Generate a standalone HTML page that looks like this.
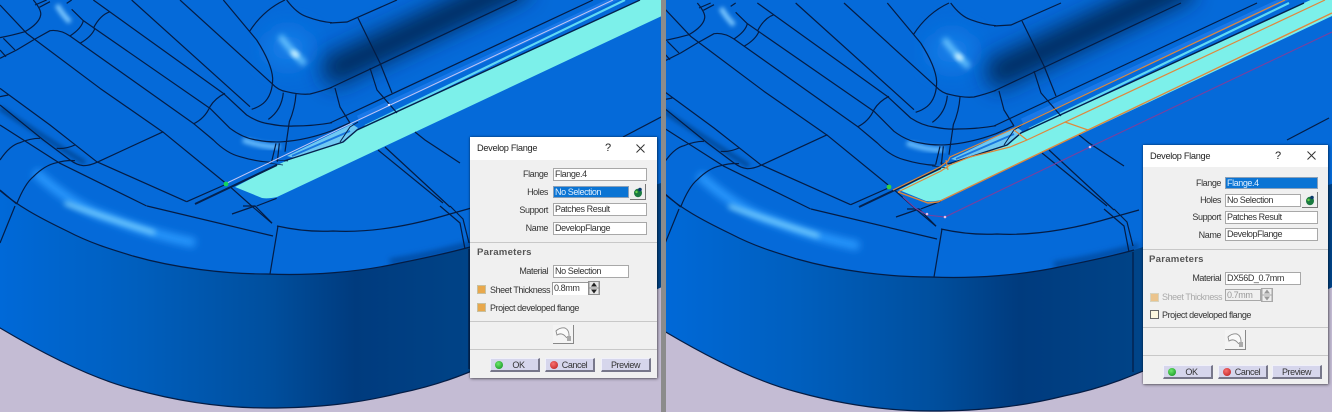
<!DOCTYPE html>
<html><head><meta charset="utf-8">
<style>
html,body{margin:0;padding:0;background:#c4bcd4}
#r{position:relative;width:1332px;height:412px;overflow:hidden;font-family:"Liberation Sans",sans-serif;color:#333}
svg.s{position:absolute;left:0;top:0;filter:blur(.3px)}
.d{position:absolute;background:#f0f0f0;box-shadow:0 0 2px rgba(0,0,0,.55),1px 1px 3px rgba(0,0,0,.35);font-size:9px;line-height:12px;letter-spacing:-.42px}
.d div{position:absolute;white-space:nowrap}
.t{left:0;top:0;right:0;height:23px;background:#fff}
.tt{left:7px;top:5px;font-size:9.2px;line-height:12px;color:#222;letter-spacing:-.3px}
.l{text-align:right;width:70px;left:8px}
.f{background:#fff;border:1px solid #a8a8a8;box-sizing:border-box;padding-left:1px;line-height:11px;height:13px}
.sel{background:#0a74d4;color:#dfefff;border-color:#8aa0b8}
.h{left:0;right:0;height:1px;background:#c8c8c8}
.p{font-weight:bold;color:#555;font-size:9.6px;letter-spacing:.25px}
.b{background:#d6d6ec;height:14px;width:50px;box-sizing:border-box;border-right:2px solid #77778a;border-bottom:2px solid #77778a;border-top:1px solid #f0f0fa;border-left:1px solid #f0f0fa;text-align:center;line-height:12px;color:#333}
.c{width:7px;height:7px;background:#e8a84c;border:1px solid #c8c0a0;box-sizing:content-box}
.dot{border-radius:50%;width:8px;height:8px}
</style></head><body><div id="r">
<svg class="s" width="1332" height="412" viewBox="0 0 1332 412" xmlns="http://www.w3.org/2000/svg">
<defs>
<filter id="b2" x="-50%" y="-50%" width="200%" height="200%"><feGaussianBlur stdDeviation="2"/></filter>
<filter id="b3" x="-50%" y="-50%" width="200%" height="200%"><feGaussianBlur stdDeviation="3"/></filter>
<filter id="b4" x="-50%" y="-50%" width="200%" height="200%"><feGaussianBlur stdDeviation="4"/></filter>
<filter id="b9" x="-30%" y="-80%" width="160%" height="260%"><feGaussianBlur stdDeviation="11"/></filter>
<linearGradient id="w" x1="0" y1="0" x2="480" y2="0" gradientUnits="userSpaceOnUse">
<stop offset="0" stop-color="#0069d8"/><stop offset=".28" stop-color="#005fbe"/><stop offset=".56" stop-color="#004f9e"/><stop offset=".74" stop-color="#003b7e"/><stop offset="1" stop-color="#004488"/>
</linearGradient>
<clipPath id="cl"><rect x="0" y="0" width="661" height="412"/></clipPath>
<clipPath id="cr"><rect x="666" y="0" width="666" height="412"/></clipPath>
<g id="m">
<rect x="-5" y="-5" width="700" height="425" fill="#c4bcd4"/>
<!-- solid body -->
<path d="M-5 325C40 352 90 378 133 389C180 402 225 408 267 408C320 408 360 403 400 393C440 385 470 373 520 350L700 270V-5H-5Z" fill="#056ad9"/>
<!-- dark band -->
<path d="M325 74L525 -20" stroke="#00295c" stroke-width="30" fill="none" filter="url(#b9)"/>
<!-- knob -->
<ellipse cx="288" cy="48" rx="24" ry="20" fill="#147ee8" filter="url(#b9)"/>
<path d="M280 36Q292 52 305 64" stroke="#68c4ff" stroke-width="6" fill="none" filter="url(#b3)"/>
<ellipse cx="295" cy="54" rx="5" ry="3" fill="#c8f0ff" filter="url(#b2)" transform="rotate(40 295 54)"/>
<path d="M57 5Q62 14 70 22" stroke="#7cc8ff" stroke-width="5" fill="none" filter="url(#b2)"/>
<path d="M243 140Q262 147 280 147" stroke="#6cc0ff" stroke-width="5" fill="none" filter="url(#b2)"/>
<!-- trough shade -->
<path d="M0 108Q40 135 85 163" stroke="#004b9f" stroke-width="5" fill="none" filter="url(#b2)"/>
<!-- rim highlights -->
<path d="M35 172Q75 208 110 218Q150 234 195 243" stroke="#2a9aff" stroke-width="9" fill="none" filter="url(#b4)"/>
<path d="M65 203Q100 216 155 233" stroke="#90e0ff" stroke-width="3.5" fill="none" filter="url(#b3)"/>
<!-- rim dark near corner -->
<path d="M390 262Q430 256 475 243" stroke="#004a9e" stroke-width="6" fill="none" filter="url(#b3)"/>
<!-- wall -->
<path d="M-5 186C15 205 40 218 67 231C90 243 110 249 133 256C175 268 225 274 267 274C310 276 360 272 400 263C420 259 445 254 470 247L700 170V270L520 350C470 373 440 385 400 393C360 403 320 408 267 408C225 408 180 402 133 389C90 378 40 352 -5 325Z" fill="url(#w)"/>
<!-- cyan band -->
<path d="M235 187L277 165L295 157L343 142L357 130L640 0L700 -28V-2L277 197Q268 199 262 198Z" fill="#7cf0ea"/>
<!-- transition strip -->
<path d="M287 156L352 124L358 128L345 142L295 158Z" fill="#6fc8f2"/>
<path d="M292 156L350 131" stroke="#1a78e0" stroke-width="2" fill="none"/>
<path d="M358 118L625 -6" stroke="#1a78e8" stroke-width="5" fill="none"/>
<path d="M365 126L625 0" stroke="#5fd8f4" stroke-width="2.2" fill="none"/>
<!-- lines traced at 3x -->
<g transform="scale(.33333)" fill="none" stroke="#041c44" stroke-width="3.6" stroke-linejoin="round">
<path d="M0 15L80 100L300 265L490 397L680 552"/>
<path d="M100 0Q125 30 122 45Q118 70 75 95Q40 105 0 113"/>
<path d="M10 115L45 150M0 150L18 170"/>
<path d="M0 175L50 150L100 120L150 92Q180 88 210 108L580 370L640 420Q680 460 720 470Q770 485 815 487"/>
<path d="M215 28L250 62L630 325L690 385Q730 415 770 420Q810 428 850 425Q920 420 996 392L1050 368"/>
<path d="M280 0L670 280L740 345Q775 368 810 372Q850 380 880 378Q940 378 996 368"/>
<path d="M395 0L750 320"/>
<path d="M540 0L815 250"/>
<path d="M670 0L770 120Q815 190 818 235Q818 285 790 310Q775 322 755 328"/>
<path d="M855 0Q790 30 748 95"/>
<path d="M860 0Q890 40 920 50Q960 65 996 68"/>
<path d="M815 250Q835 272 860 275Q900 285 930 282Q960 275 996 262"/>
<path d="M105 15L140 0M118 22L150 5M200 10L215 0"/>
<path d="M280 85Q300 45 330 35"/>
<path d="M250 62Q245 85 210 108"/>
<path d="M285 85Q275 110 240 130"/>
<path d="M675 280Q645 295 630 320Q615 355 580 372"/>
<path d="M850 278Q845 330 805 358"/>
<path d="M888 282Q885 325 868 365L855 455"/>
<path d="M828 430L815 485M838 430L832 485"/>
<path d="M0 265L150 375L290 485L560 605"/>
<path d="M0 375L180 490L440 618"/>
<path d="M490 395L295 485"/>
<path d="M295 485Q270 497 250 497Q230 495 210 480L130 420L0 315"/>
<path d="M0 290L25 285"/>
<path d="M0 480Q30 435 60 428Q90 415 120 415"/>
<path d="M50 612Q75 550 100 530Q135 495 170 488Q200 480 225 482"/>
<path d="M225 435Q195 448 170 445"/>
<path d="M0 570L50 612"/>
<path d="M560 605L680 552"/>
<path d="M690 560L755 618L816 670"/>
<path d="M770 618L830 595"/>
</g>
<g fill="none" stroke="#041c44" stroke-width="1.2">
<path d="M243 206L255 206"/>
<path d="M232 214L255 206L272 223"/>
<path d="M147 206L273 236"/>
<path d="M277 226C295 230 315 232 333 231C370 233 410 226 450 214L475 207"/>
<path d="M278 226L270 274"/>
<path d="M440 206L460 223L465 249"/>
<path d="M450 206L463 219L469 243"/>
<path d="M15 206L0 243"/>
<path d="M469 249V369"/>
<path d="M-5 186C15 205 40 218 67 231C90 243 110 249 133 256C175 268 225 274 267 274C310 276 360 272 400 263C420 259 445 254 470 247"/>
<path d="M-5 325C40 352 90 378 133 389C180 402 225 408 267 408C320 408 360 403 400 393C440 385 470 373 520 350"/>
<path d="M335 88L340 107L350 123"/>
<path d="M358 18L380 63L392 93"/>
<path d="M370 68L377 90L397 113"/>
<path d="M330 123L347 115L593 0"/>
<path d="M330 88L517 0"/>
<path d="M330 23L347 22L397 0"/>
<path d="M415 132L425 140L460 163"/>
<path d="M378 150L443 203"/>
<path d="M385 147L450 207"/>
<path d="M623 137L665 115"/>
</g>
<path d="M195 204L277 165" stroke="#05214d" stroke-width="2" fill="none"/>
<path d="M284 161L343 142L357 130L640 0" stroke="#05214d" stroke-width="1.4" fill="none"/>
<path d="M340 142L350 127L358 122" stroke="#05214d" stroke-width="1" fill="none"/>
<path d="M268 163L283 165M276 160L288 161" stroke="#05214d" stroke-width=".8" fill="none"/>
</g>
</defs>
<g clip-path="url(#cl)">
<use href="#m"/>
<path d="M227 183L352 123L613 0" stroke="#c2c6f4" stroke-width="1" fill="none"/>
<circle cx="389" cy="105" r="1.2" fill="#e8e8ff"/>
<circle cx="226" cy="184" r="2.4" fill="#16d45a"/>
</g>
<rect x="661" y="0" width="5" height="412" fill="#8c8c8c"/>
<g clip-path="url(#cr)">
<g transform="translate(664 3)"><use href="#m"/></g>
<g fill="none" stroke="#e0883c" stroke-width="1.2">
<path d="M893 190L940 167L948 161L950 157L1015 128L1285 0"/>
<path d="M898 192L941 171L950 165L970 157L1010 147L1027 140L1325 0"/>
<path d="M1065 122L1088 130"/>
<path d="M898 192L928 203L938 202L1088 130L1332 13" stroke-width="1.4"/>
<path d="M946 160L948 170M1014 130L1027 140"/>
</g>
<path d="M903 197L915 208L927 215L945 217L1090 147L1332 32" fill="none" stroke="#78409e" stroke-width="1.1"/>
<g fill="#e8c0e8"><circle cx="927" cy="214" r="1.3"/><circle cx="945" cy="217" r="1.3"/><circle cx="1090" cy="147" r="1.3"/></g>
<circle cx="889" cy="187" r="2.4" fill="#34d044"/>
</g>
</svg>

<!-- left dialog -->
<div class="d" style="left:470px;top:137px;width:187px;height:241px">
<div class="t"></div><div class="tt">Develop Flange</div>
<div style="left:135px;top:4px;font-size:11px;line-height:14px;color:#222">?</div>
<svg style="position:absolute;left:165px;top:6px" width="11" height="11"><path d="M1.5 1.5L9.5 9.5M9.5 1.5L1.5 9.5" stroke="#333" stroke-width="1" fill="none"/></svg>
<div class="l" style="top:31px">Flange</div><div class="f" style="left:83px;top:31px;width:94px">Flange.4</div>
<div class="l" style="top:49px">Holes</div><div class="f sel" style="left:83px;top:49px;width:76px;height:12px">No Selection</div>
<div style="left:160px;top:47px;width:16px;height:16px;background:#efefef;border-right:1px solid #777;border-bottom:1px solid #777;box-sizing:border-box"></div>
<svg style="position:absolute;left:162px;top:49px" width="12" height="12"><ellipse cx="6" cy="7" rx="4" ry="4.2" fill="#1a7a40"/><circle cx="8" cy="3.5" r="1.8" fill="#0a3a6a"/><circle cx="4.5" cy="6" r="1.2" fill="#69d04a"/></svg>
<div class="l" style="top:67px">Support</div><div class="f" style="left:83px;top:66px;width:94px">Patches Result</div>
<div class="l" style="top:85px">Name</div><div class="f" style="left:83px;top:85px;width:94px">DevelopFlange</div>
<div class="h" style="top:105px"></div>
<div class="p" style="left:7px;top:110px">Parameters</div>
<div class="l" style="top:128px">Material</div><div class="f" style="left:83px;top:128px;width:76px">No Selection</div>
<div class="c" style="left:7px;top:148px"></div><div style="left:20px;top:147px">Sheet Thickness</div>
<div class="f" style="left:82px;top:145px;width:37px;height:13px;border:none;border-left:1px solid #999;border-top:1px solid #999">0.8mm</div>
<svg style="position:absolute;left:118px;top:144px" width="12" height="14"><rect width="12" height="14" fill="#909090"/><rect x="1.5" y="1" width="9" height="5.5" fill="#e8e8e8"/><rect x="1.5" y="7.5" width="9" height="5.5" fill="#e8e8e8"/><path d="M6 1.5L9 5.5H3ZM6 12.5L9 8.5H3Z" fill="#222"/></svg>
<div class="c" style="left:7px;top:166px"></div><div style="left:20px;top:165px">Project developed flange</div>
<div class="h" style="top:184px"></div>
<div style="left:83px;top:188px;width:21px;height:19px;background:#f4f4f4;border-right:1px solid #888;border-bottom:1px solid #888;box-sizing:border-box"></div>
<svg style="position:absolute;left:84px;top:189px" width="18" height="17"><path d="M2 5Q6 1 11 2Q15 4 15 9V13L12 11Q8 6 3 9Z" fill="#fafafa" stroke="#888" stroke-width=".9"/><rect x="13" y="10" width="4" height="5" fill="#aaa"/></svg>
<div class="h" style="top:212px"></div>
<div class="b" style="left:20px;top:221px;padding-left:8px">OK</div>
<div class="dot" style="left:25px;top:224px;background:radial-gradient(circle at 40% 35%,#6de86d,#0a8a1a)"></div>
<div class="b" style="left:75px;top:221px;padding-left:10px">Cancel</div>
<div class="dot" style="left:80px;top:224px;background:radial-gradient(circle at 40% 35%,#f87070,#b81818)"></div>
<div class="b" style="left:131px;top:221px">Preview</div>
</div>

<!-- right dialog -->
<div class="d" style="left:1143px;top:145px;width:185px;height:239px">
<div class="t" style="height:22px"></div><div class="tt">Develop Flange</div>
<div style="left:132px;top:4px;font-size:11px;line-height:14px;color:#222">?</div>
<svg style="position:absolute;left:163px;top:5px" width="11" height="11"><path d="M1.5 1.5L9.5 9.5M9.5 1.5L1.5 9.5" stroke="#333" stroke-width="1" fill="none"/></svg>
<div class="l" style="top:32px">Flange</div><div class="f sel" style="left:82px;top:32px;width:93px;height:12px">Flange.4</div>
<div class="l" style="top:49px">Holes</div><div class="f" style="left:82px;top:49px;width:76px">No Selection</div>
<div style="left:159px;top:47px;width:16px;height:16px;background:#efefef;border-right:1px solid #777;border-bottom:1px solid #777;box-sizing:border-box"></div>
<svg style="position:absolute;left:161px;top:49px" width="12" height="12"><ellipse cx="6" cy="7" rx="4" ry="4.2" fill="#1a7a40"/><circle cx="8" cy="3.5" r="1.8" fill="#0a3a6a"/><circle cx="4.5" cy="6" r="1.2" fill="#69d04a"/></svg>
<div class="l" style="top:66px">Support</div><div class="f" style="left:82px;top:66px;width:93px">Patches Result</div>
<div class="l" style="top:84px">Name</div><div class="f" style="left:82px;top:83px;width:93px">DevelopFlange</div>
<div class="h" style="top:104px"></div>
<div class="p" style="left:6px;top:109px">Parameters</div>
<div class="l" style="top:127px">Material</div><div class="f" style="left:82px;top:127px;width:76px">DX56D_0.7mm</div>
<div class="c" style="left:7px;top:148px;opacity:.6"></div><div style="left:19px;top:146px;color:#aaa">Sheet Thickness</div>
<div class="f" style="left:82px;top:144px;width:36px;height:12px;color:#999;background:#f0f0f0">0.7mm</div>
<svg style="position:absolute;left:118px;top:143px" width="12" height="14"><rect width="12" height="14" fill="#a8a8a8"/><rect x="1.5" y="1" width="9" height="5.5" fill="#eee"/><rect x="1.5" y="7.5" width="9" height="5.5" fill="#eee"/><path d="M6 1.5L9 5.5H3ZM6 12.5L9 8.5H3Z" fill="#999"/></svg>
<div class="c" style="left:7px;top:165px;background:#fdf8e0;border-color:#666"></div><div style="left:19px;top:164px">Project developed flange</div>
<div class="h" style="top:182px"></div>
<div style="left:82px;top:185px;width:21px;height:20px;background:#f4f4f4;border-right:1px solid #888;border-bottom:1px solid #888;box-sizing:border-box"></div>
<svg style="position:absolute;left:83px;top:187px" width="18" height="17"><path d="M2 5Q6 1 11 2Q15 4 15 9V13L12 11Q8 6 3 9Z" fill="#fafafa" stroke="#888" stroke-width=".9"/><rect x="13" y="10" width="4" height="5" fill="#aaa"/></svg>
<div class="h" style="top:210px"></div>
<div class="b" style="left:20px;top:220px;padding-left:8px">OK</div>
<div class="dot" style="left:25px;top:223px;background:radial-gradient(circle at 40% 35%,#6de86d,#0a8a1a)"></div>
<div class="b" style="left:75px;top:220px;padding-left:10px">Cancel</div>
<div class="dot" style="left:80px;top:223px;background:radial-gradient(circle at 40% 35%,#f87070,#b81818)"></div>
<div class="b" style="left:129px;top:220px">Preview</div>
</div>
</div></body></html>
